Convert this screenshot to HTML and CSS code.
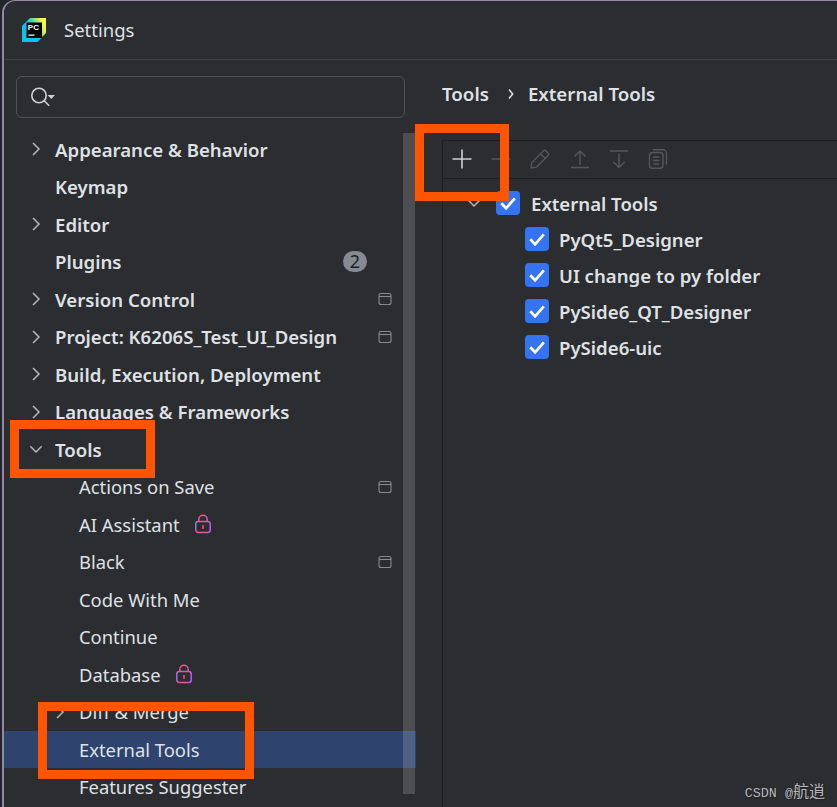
FILE: index.html
```html
<!DOCTYPE html>
<html lang="en">
<head>
    <meta charset="UTF-8">
    <meta name="viewport" content="width=device-width, initial-scale=1.0">
    <title>Settings</title>
    <link rel="stylesheet" href="styles.css">
</head>
<body>
    <!-- Shared icons -->
    <svg width="0" height="0" class="defs">
        <defs>
            <linearGradient id="lockGradient" gradientUnits="userSpaceOnUse" x1="1" y1="10" x2="17" y2="12">
                <stop offset="0" stop-color="#7b7cff"/>
                <stop offset="0.2" stop-color="#f2548f"/>
                <stop offset="0.55" stop-color="#ec5590"/>
                <stop offset="1" stop-color="#b35cff"/>
            </linearGradient>
            <linearGradient id="logoGradient" x1="0" y1="0.6" x2="1" y2="0.2">
                <stop offset="0.2" stop-color="#07c3f2"/>
                <stop offset="0.5" stop-color="#3fd6b0"/>
                <stop offset="0.9" stop-color="#fcf84a"/>
            </linearGradient>
        </defs>
        <symbol id="right" viewBox="0 0 16 16"><path d="M5 2l6 6-6 6"/></symbol>
        <symbol id="down" viewBox="0 0 16 16"><path d="M2.3 5.3L8 11l5.700-5.700"/></symbol>
        <symbol id="project" viewBox="0 0 14 14"><rect x="1" y="1.500" width="12" height="11" rx="2"/><path d="M1 4.500h12"/></symbol>
        <symbol id="lock" viewBox="0 0 18 20"><rect x="1.800" y="7.500" width="14.400" height="11" rx="2.500"/><path d="M4.800 7.500V5.500a4.200 4.200 0 0 1 8.400 0v2"/><path d="M9 11v4"/></symbol>
        <symbol id="check" viewBox="0 0 24 24"><path d="M5.300 12.300l4.800 5L18.800 7.300"/></symbol>
    </svg>

    <div class="window">
        <div class="titlebar">
            <svg class="logo" viewBox="0 0 24 24">
                <path d="M0 8L8 0h16v15L15 24H0z" fill="url(#logoGradient)"/>
                <path d="M0 8l5-4v16h14l-4 4H0z" fill="#07c3f2"/>
                <rect x="4.500" y="4.500" width="15.500" height="15.500" fill="#000"/>
                <text x="5.800" y="12" class="logo-text">PC</text>
                <path d="M6.500 17.200h6" stroke="#fff" stroke-width="1.300"/>
            </svg>
            <span class="title">Settings</span>
        </div>

        <div class="main">
            <div class="sidebar">
                <div class="search">
                    <svg viewBox="0 0 26 20"><circle cx="8" cy="8.500" r="7.200"/><path d="M13.200 13.700l5 5"/><path class="caret" d="M16.500 8h7.500l-3.700 4z"/></svg>
                </div>
                <ul class="tree">
                    <li class="top"><svg class="arrow"><use href="#right"/></svg><span>Appearance &amp; Behavior</span></li>
                    <li class="top"><i class="arrow"></i><span>Keymap</span></li>
                    <li class="top"><svg class="arrow"><use href="#right"/></svg><span>Editor</span></li>
                    <li class="top"><i class="arrow"></i><span>Plugins</span><b class="badge">2</b></li>
                    <li class="top"><svg class="arrow"><use href="#right"/></svg><span>Version Control</span><svg class="project"><use href="#project"/></svg></li>
                    <li class="top"><svg class="arrow"><use href="#right"/></svg><span>Project: K6206S_Test_UI_Design</span><svg class="project"><use href="#project"/></svg></li>
                    <li class="top"><svg class="arrow"><use href="#right"/></svg><span>Build, Execution, Deployment</span></li>
                    <li class="top"><svg class="arrow"><use href="#right"/></svg><span>Languages &amp; Frameworks</span></li>
                    <li class="top"><svg class="arrow"><use href="#down"/></svg><span>Tools</span></li>
                    <li class="sub"><i class="arrow"></i><span>Actions on Save</span><svg class="project"><use href="#project"/></svg></li>
                    <li class="sub"><i class="arrow"></i><span>AI Assistant</span><svg class="lock"><use href="#lock"/></svg></li>
                    <li class="sub"><i class="arrow"></i><span>Black</span><svg class="project"><use href="#project"/></svg></li>
                    <li class="sub"><i class="arrow"></i><span>Code With Me</span></li>
                    <li class="sub"><i class="arrow"></i><span>Continue</span></li>
                    <li class="sub"><i class="arrow"></i><span>Database</span><svg class="lock"><use href="#lock"/></svg></li>
                    <li class="sub"><svg class="arrow"><use href="#right"/></svg><span>Diff &amp; Merge</span></li>
                    <li class="sub selected"><i class="arrow"></i><span>External Tools</span></li>
                    <li class="sub"><i class="arrow"></i><span>Features Suggester</span></li>
                </ul>
                <div class="scrollbar"></div>
            </div>

            <div class="content">
                <div class="breadcrumb">
                    <span>Tools</span>
                    <svg viewBox="0 0 6 12"><path d="M1 1.500L4.700 6 1 10.500"/></svg>
                    <span>External Tools</span>
                </div>
                <div class="panel">
                    <div class="toolbar">
                        <svg class="enabled" viewBox="0 0 20 20"><path d="M10 .5v19M.5 10h19"/></svg>
                        <svg viewBox="0 0 20 20"><path d="M.5 10h19"/></svg>
                        <svg viewBox="0 0 20 20"><path d="M1 19l.8-5.500L13.300 2a2 2 0 0 1 2.800 0l1.900 1.900a2 2 0 0 1 0 2.800L6.500 18.200zM10.500 4.800l4.700 4.700"/></svg>
                        <svg viewBox="0 0 20 20"><path d="M1 18.500h18M10 16V2M4.500 7.500L10 2l5.500 5.500"/></svg>
                        <svg viewBox="0 0 20 20"><path d="M1 2h18M10 4.500v14M4.500 13l5.500 5.500 5.500-5.500"/></svg>
                        <svg viewBox="0 0 20 20"><rect x="1.500" y="3.500" width="13.500" height="15.800" rx="3"/><path d="M5 .8h9.500a4 4 0 0 1 4 4V15.500M5.300 8h6M5.300 11.500h6M5.300 15h6"/></svg>
                    </div>
                    <ul class="tools">
                        <li class="group"><svg class="arrow"><use href="#down"/></svg><svg class="checkbox"><use href="#check"/></svg><span>External Tools</span></li>
                        <li><svg class="checkbox"><use href="#check"/></svg><span>PyQt5_Designer</span></li>
                        <li><svg class="checkbox"><use href="#check"/></svg><span>UI change to py folder</span></li>
                        <li><svg class="checkbox"><use href="#check"/></svg><span>PySide6_QT_Designer</span></li>
                        <li><svg class="checkbox"><use href="#check"/></svg><span>PySide6-uic</span></li>
                    </ul>
                </div>
            </div>
        </div>
    </div>

    <!-- Step markers -->
    <div class="marker marker-tools"></div>
    <div class="marker marker-external"></div>
    <div class="marker marker-add"></div>
    <div class="watermark">CSDN @<span>航逍</span></div>
</body>
</html>
```
FILE: styles.css
```css
* {
    box-sizing: border-box;
}

body {
    margin: 0;
    padding: 0 0 0 2px;
    height: 807px;
    overflow: hidden;
    position: relative;
    background-color: #232427;
    font-family: "Noto Sans", "Open Sans", sans-serif;
    font-size: 18.7px;
    color: #dfe1e5;
}

svg {
    fill: none;
    flex-shrink: 0;
}

.defs {
    position: absolute;
}

ul {
    list-style: none;
    margin: 0;
    padding: 0;
}

.window {
    height: 807px;
    background-color: #2b2d30;
    border-left: 2px solid #9389a5;
    border-top: 1px solid #9389a5;
    border-top-left-radius: 13px;
    overflow: hidden;
}

.titlebar {
    display: flex;
    align-items: center;
    height: 59px;
    padding-left: 18px;
    border-bottom: 1px solid #3d3f43;
}

.title {
    padding-bottom: 2px;
    font-size: 18.5px;
}

.logo {
    width: 24px;
    height: 24px;
    margin-right: 18px;
}

.logo-text {
    font-family: "Liberation Sans", sans-serif;
    font-size: 8px;
    font-weight: bold;
    fill: #fff;
}

.main {
    display: flex;
    height: 747px;
}

.sidebar {
    position: relative;
    width: 412px;
    padding-top: 16px;
}

.search {
    display: flex;
    align-items: center;
    width: 389px;
    height: 42px;
    margin: 0 0 12.5px 12px;
    padding-left: 14px;
    border: 1.5px solid #4e5157;
    border-radius: 6px;
}

.search svg {
    width: 26px;
    height: 20px;
    stroke: #ced0d6;
    stroke-width: 1.6;
}

.search .caret {
    fill: #ced0d6;
    stroke: none;
}

.tree li {
    display: flex;
    align-items: center;
    height: 37.5px;
    padding-right: 24px;
    white-space: nowrap;
}

.tree .top {
    padding-left: 24px;
    font-size: 18.6px;
    font-weight: 600;
}

.tree .sub {
    padding-left: 48px;
    font-size: 18.4px;
}

.tree .selected {
    background-color: #2e436e;
}

.arrow {
    width: 16px;
    height: 16px;
    margin-right: 11px;
    stroke: #b4b8bf;
    stroke-width: 1.5;
}

.badge {
    width: 24px;
    height: 21px;
    margin: 0 25px 0 auto;
    border-radius: 11px;
    background-color: #868a91;
    color: #1e1f22;
    font-size: 18px;
    font-weight: 400;
    line-height: 21px;
    text-align: center;
}

.project {
    width: 14px;
    height: 14px;
    margin-left: auto;
    stroke: #868a91;
    stroke-width: 1.1;
}

.lock {
    width: 18px;
    height: 20px;
    margin-left: 14px;
    stroke: url(#lockGradient);
    stroke-width: 1.5;
}

.scrollbar {
    position: absolute;
    top: 73px;
    left: 399px;
    width: 12px;
    height: 661px;
    background-color: rgba(255, 255, 255, 0.16);
}

.content {
    display: flex;
    flex-direction: column;
    flex: 1;
    padding: 19px 0 0 26px;
}

.breadcrumb {
    display: flex;
    align-items: center;
    height: 28px;
    font-weight: 600;
}

.breadcrumb svg {
    width: 6px;
    height: 12px;
    margin: 2px 14px 0 19px;
    stroke: #dfe1e5;
    stroke-width: 1.5;
}

.panel {
    flex: 1;
    margin-top: 33px;
    border: solid #1e1f22;
    border-width: 1px 0 0 1px;
}

.toolbar {
    display: flex;
    align-items: center;
    gap: 19.2px;
    height: 38px;
    padding: 0 0 1px 9px;
    border-bottom: 1px solid #1e1f22;
}

.toolbar svg {
    width: 20px;
    height: 20px;
    stroke: #55575c;
    stroke-width: 1.4;
}

.toolbar .enabled {
    stroke: #ced0d6;
    stroke-width: 1.6;
}

.tools {
    padding-top: 6px;
}

.tools li {
    display: flex;
    align-items: center;
    height: 36px;
    padding-left: 82px;
    font-size: 18.6px;
    font-weight: 600;
}

.tools .group {
    padding-left: 23px;
}

.tools .arrow {
    margin-right: 14px;
}

.checkbox {
    width: 24px;
    height: 24px;
    margin: 0 10px 0 0;
    border-radius: 4px;
    background-color: #3574f0;
    stroke: #fff;
    stroke-width: 2.7;
}

.group .checkbox {
    margin-right: 11px;
}

.marker {
    position: absolute;
    border: 9px solid #ff5500;
}

.marker-tools {
    top: 420px;
    left: 10px;
    width: 145px;
    height: 58px;
}

.marker-external {
    top: 702px;
    left: 38px;
    width: 216px;
    height: 77px;
}

.marker-add {
    top: 124px;
    left: 415px;
    width: 94px;
    height: 77px;
}

.watermark {
    position: absolute;
    right: 12px;
    bottom: 5px;
    color: #b5b6b8;
    font-family: "Liberation Mono", monospace;
    font-size: 13.4px;
    text-shadow: 1px 1px 1px #1e1f22;
}

.watermark span {
    font-family: "Noto Sans CJK SC", sans-serif;
    font-size: 16px;
}
```
